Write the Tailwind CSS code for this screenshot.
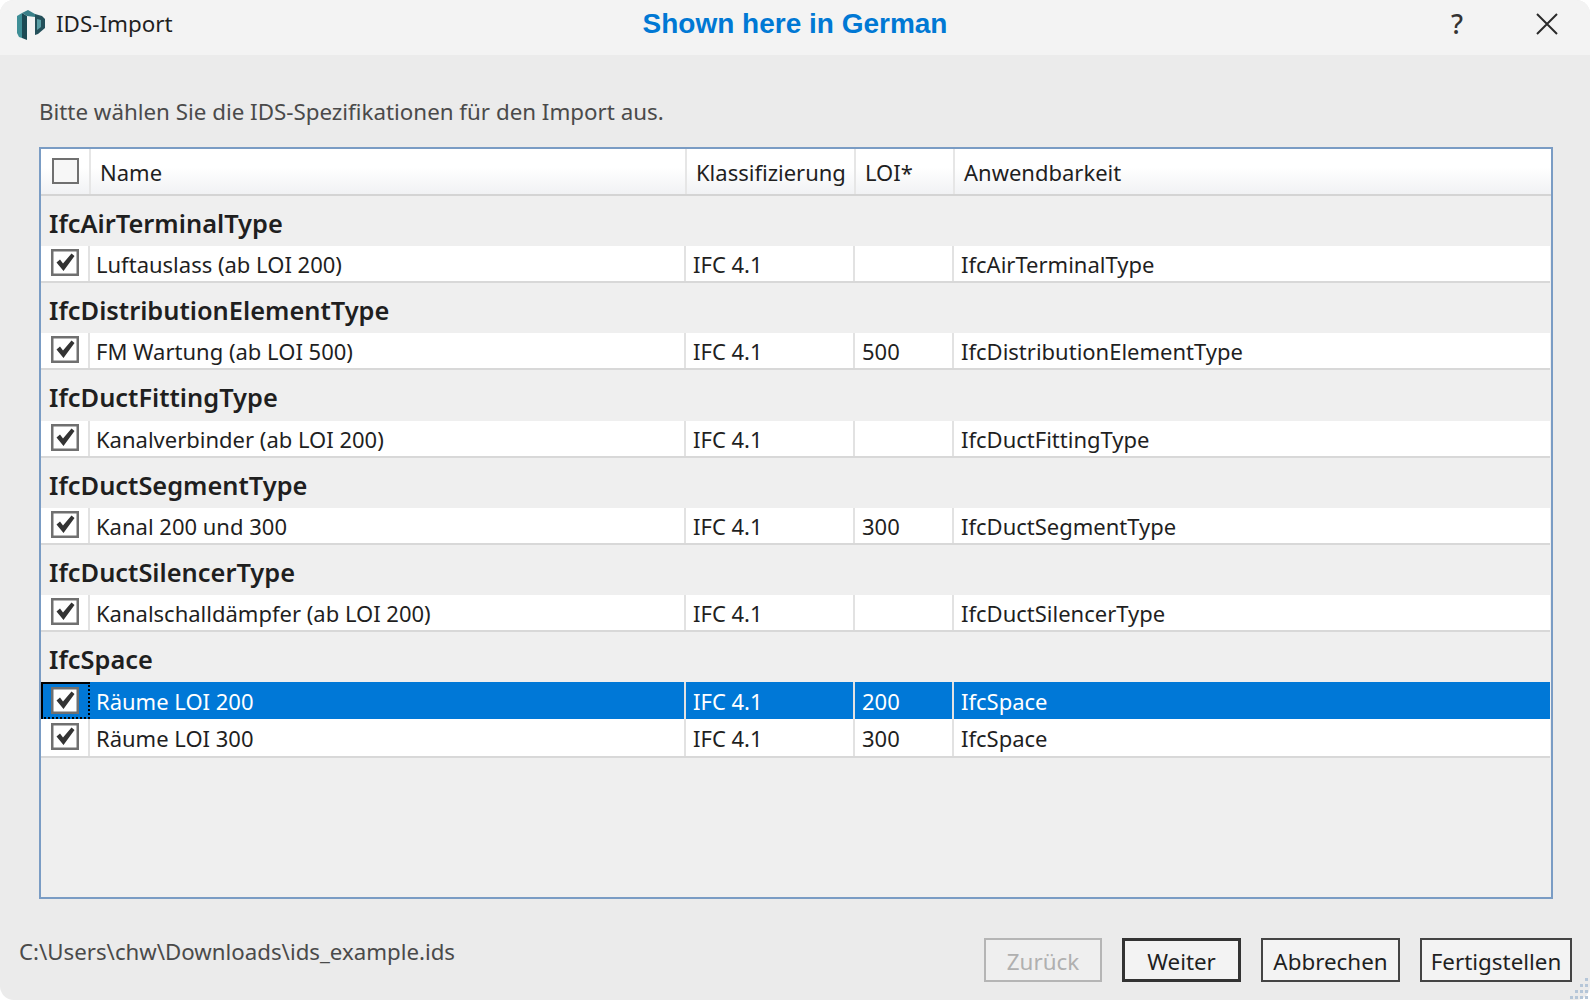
<!DOCTYPE html>
<html lang="de">
<head>
  <meta charset="UTF-8" />
  <title>IDS-Import</title>
  <script src="https://cdn.jsdelivr.net/npm/@tailwindcss/browser@4"></script>
</head>
<body class="relative bg-white h-[1000px] overflow-hidden font-['Noto_Sans','Open_Sans',sans-serif] text-[#1f1f1f]">
  <div class="h-[1000px] rounded-[14px] bg-[#ebebeb] overflow-hidden flex flex-col">

    <!-- title bar -->
    <div class="h-[55px] pb-[7px] bg-[#f3f3f3] flex items-center relative shrink-0">
      <svg class="ml-[16px] w-[30px] h-[32px]" viewBox="0 0 30 32">
        <path d="M1 8 L6 5 L6 30 L3 29 L1 25 Z" fill="#3f8f97" />
        <path d="M6 5 L11 8 L11 32 L6 30 Z" fill="#1c4a54" />
        <path d="M6 5 L12 2 L19 6 L19 9 L11 8 Z" fill="#3a8089" />
        <path d="M19 6 L26 8 L29 11 L29 20 L22 26 L19 27 Z" fill="#24505a" />
        <path d="M21 11 L25 12 L25 19 L21 22 Z" fill="#5a9fa6" />
      </svg>
      <span class="ml-[10px] text-[22.4px] leading-none">IDS-Import</span>
      <span class="absolute left-0 right-0 text-center text-[28px] font-bold text-[#0078d4] font-['Liberation_Sans',sans-serif]">Shown here in German</span>
      <span class="absolute left-[1451px] text-[27px] font-medium text-[#333]">?</span>
      <svg class="absolute left-[1535px] top-[12px] w-[24px] h-[24px]" viewBox="0 0 24 24" fill="none" stroke="#2a2a2a" stroke-width="2"><path d="M2 2 L22 22 M22 2 L2 22" /></svg>
    </div>

    <div class="pl-[39px] pt-[42px] h-[92px] text-[22.35px] leading-[30px] text-[#4a4a4a] shrink-0">Bitte wählen Sie die IDS-Spezifikationen für den Import aus.</div>

    <!-- table -->
    <div class="ml-[39px] w-[1514px] h-[752px] border-2 border-[#7a9cc4] bg-[#efefef] shrink-0 text-[22px]">
      <div class="grid grid-cols-[50px_596px_169px_99px_1fr] h-[47px] border-b-2 border-[#d4d4d4] bg-gradient-to-b from-white from-40% to-[#f1f2f4]">
        <div class="flex items-center justify-center border-r-2 border-[#e6e6e6] pl-[1px]"><span class="w-[27px] h-[26px] border-2 border-[#707070] bg-[#f7f7f7] mb-[1px]"></span></div>
        <div class="flex items-center pl-[9px] pt-[2px] border-r-2 border-[#e6e6e6]">Name</div>
        <div class="flex items-center pl-[9px] pt-[2px] border-r-2 border-[#e6e6e6]">Klassifizierung</div>
        <div class="flex items-center pl-[9px] pt-[2px] border-r-2 border-[#e6e6e6]">LOI*</div>
        <div class="flex items-center pl-[9px] pt-[2px]">Anwendbarkeit</div>
      </div>

      <div class="h-[50.2px] pl-[8px] flex items-end pb-[4px] text-[25.4px] font-semibold">IfcAirTerminalType</div>
      <div class="grid grid-cols-[49px_596px_169px_99px_1fr] h-[37px] w-[1509px] border-b-2 border-[#d8d8d8] bg-white">
        <div class="flex items-center justify-center border-r-2 border-[#e2e2e2] pb-[2px]"><svg class="w-[28px] h-[27px]" viewBox="0 0 28 27"><rect x="1.25" y="1.25" width="25.5" height="24.5" fill="#fff" stroke="#707070" stroke-width="2.5" /><path d="M5.5 13.5 L9 10.5 L12 14.5 L20.5 4.5 L23.5 7 L12.5 22 Z" fill="#333" /></svg></div>
        <div class="flex items-center pl-[6px] pt-[2px] border-r-2 border-[#e2e2e2]">Luftauslass (ab LOI 200)</div>
        <div class="flex items-center pl-[7px] pt-[2px] border-r-2 border-[#e2e2e2]">IFC 4.1</div>
        <div class="flex items-center pl-[7px] pt-[2px] border-r-2 border-[#e2e2e2]"></div>
        <div class="flex items-center pl-[7px] pt-[2px]">IfcAirTerminalType</div>
      </div>

      <div class="h-[50.2px] pl-[8px] flex items-end pb-[4px] text-[25.4px] font-semibold">IfcDistributionElementType</div>
      <div class="grid grid-cols-[49px_596px_169px_99px_1fr] h-[37px] w-[1509px] border-b-2 border-[#d8d8d8] bg-white">
        <div class="flex items-center justify-center border-r-2 border-[#e2e2e2] pb-[2px]"><svg class="w-[28px] h-[27px]" viewBox="0 0 28 27"><rect x="1.25" y="1.25" width="25.5" height="24.5" fill="#fff" stroke="#707070" stroke-width="2.5" /><path d="M5.5 13.5 L9 10.5 L12 14.5 L20.5 4.5 L23.5 7 L12.5 22 Z" fill="#333" /></svg></div>
        <div class="flex items-center pl-[6px] pt-[2px] border-r-2 border-[#e2e2e2]">FM Wartung (ab LOI 500)</div>
        <div class="flex items-center pl-[7px] pt-[2px] border-r-2 border-[#e2e2e2]">IFC 4.1</div>
        <div class="flex items-center pl-[7px] pt-[2px] border-r-2 border-[#e2e2e2]">500</div>
        <div class="flex items-center pl-[7px] pt-[2px]">IfcDistributionElementType</div>
      </div>

      <div class="h-[50.2px] pl-[8px] flex items-end pb-[4px] text-[25.4px] font-semibold">IfcDuctFittingType</div>
      <div class="grid grid-cols-[49px_596px_169px_99px_1fr] h-[37px] w-[1509px] border-b-2 border-[#d8d8d8] bg-white">
        <div class="flex items-center justify-center border-r-2 border-[#e2e2e2] pb-[2px]"><svg class="w-[28px] h-[27px]" viewBox="0 0 28 27"><rect x="1.25" y="1.25" width="25.5" height="24.5" fill="#fff" stroke="#707070" stroke-width="2.5" /><path d="M5.5 13.5 L9 10.5 L12 14.5 L20.5 4.5 L23.5 7 L12.5 22 Z" fill="#333" /></svg></div>
        <div class="flex items-center pl-[6px] pt-[2px] border-r-2 border-[#e2e2e2]">Kanalverbinder (ab LOI 200)</div>
        <div class="flex items-center pl-[7px] pt-[2px] border-r-2 border-[#e2e2e2]">IFC 4.1</div>
        <div class="flex items-center pl-[7px] pt-[2px] border-r-2 border-[#e2e2e2]"></div>
        <div class="flex items-center pl-[7px] pt-[2px]">IfcDuctFittingType</div>
      </div>

      <div class="h-[50.2px] pl-[8px] flex items-end pb-[4px] text-[25.4px] font-semibold">IfcDuctSegmentType</div>
      <div class="grid grid-cols-[49px_596px_169px_99px_1fr] h-[37px] w-[1509px] border-b-2 border-[#d8d8d8] bg-white">
        <div class="flex items-center justify-center border-r-2 border-[#e2e2e2] pb-[2px]"><svg class="w-[28px] h-[27px]" viewBox="0 0 28 27"><rect x="1.25" y="1.25" width="25.5" height="24.5" fill="#fff" stroke="#707070" stroke-width="2.5" /><path d="M5.5 13.5 L9 10.5 L12 14.5 L20.5 4.5 L23.5 7 L12.5 22 Z" fill="#333" /></svg></div>
        <div class="flex items-center pl-[6px] pt-[2px] border-r-2 border-[#e2e2e2]">Kanal 200 und 300</div>
        <div class="flex items-center pl-[7px] pt-[2px] border-r-2 border-[#e2e2e2]">IFC 4.1</div>
        <div class="flex items-center pl-[7px] pt-[2px] border-r-2 border-[#e2e2e2]">300</div>
        <div class="flex items-center pl-[7px] pt-[2px]">IfcDuctSegmentType</div>
      </div>

      <div class="h-[50.2px] pl-[8px] flex items-end pb-[4px] text-[25.4px] font-semibold">IfcDuctSilencerType</div>
      <div class="grid grid-cols-[49px_596px_169px_99px_1fr] h-[37px] w-[1509px] border-b-2 border-[#d8d8d8] bg-white">
        <div class="flex items-center justify-center border-r-2 border-[#e2e2e2] pb-[2px]"><svg class="w-[28px] h-[27px]" viewBox="0 0 28 27"><rect x="1.25" y="1.25" width="25.5" height="24.5" fill="#fff" stroke="#707070" stroke-width="2.5" /><path d="M5.5 13.5 L9 10.5 L12 14.5 L20.5 4.5 L23.5 7 L12.5 22 Z" fill="#333" /></svg></div>
        <div class="flex items-center pl-[6px] pt-[2px] border-r-2 border-[#e2e2e2]">Kanalschalldämpfer (ab LOI 200)</div>
        <div class="flex items-center pl-[7px] pt-[2px] border-r-2 border-[#e2e2e2]">IFC 4.1</div>
        <div class="flex items-center pl-[7px] pt-[2px] border-r-2 border-[#e2e2e2]"></div>
        <div class="flex items-center pl-[7px] pt-[2px]">IfcDuctSilencerType</div>
      </div>

      <div class="h-[50.2px] pl-[8px] flex items-end pb-[4px] text-[25.4px] font-semibold">IfcSpace</div>
      <div class="grid grid-cols-[49px_596px_169px_99px_1fr] h-[37px] w-[1509px] bg-[#0078d7] text-white">
        <div class="flex items-center justify-center border-2 border-dotted border-black [border-top-style:solid] [border-left-style:solid] pb-[1px] pr-[2px]"><svg class="w-[28px] h-[27px]" viewBox="0 0 28 27"><rect x="1.25" y="1.25" width="25.5" height="24.5" fill="#fff" stroke="#707070" stroke-width="2.5" /><path d="M5.5 13.5 L9 10.5 L12 14.5 L20.5 4.5 L23.5 7 L12.5 22 Z" fill="#333" /></svg></div>
        <div class="flex items-center pl-[6px] pt-[2px] border-r-2 border-[#e2e2e2]">Räume LOI 200</div>
        <div class="flex items-center pl-[7px] pt-[2px] border-r-2 border-[#e2e2e2]">IFC 4.1</div>
        <div class="flex items-center pl-[7px] pt-[2px] border-r-2 border-[#e2e2e2]">200</div>
        <div class="flex items-center pl-[7px] pt-[2px]">IfcSpace</div>
      </div>
      <div class="grid grid-cols-[49px_596px_169px_99px_1fr] h-[39px] w-[1509px] border-b-2 border-[#d8d8d8] bg-white">
        <div class="flex items-center justify-center border-r-2 border-[#e2e2e2] pb-[2px]"><svg class="w-[28px] h-[27px]" viewBox="0 0 28 27"><rect x="1.25" y="1.25" width="25.5" height="24.5" fill="#fff" stroke="#707070" stroke-width="2.5" /><path d="M5.5 13.5 L9 10.5 L12 14.5 L20.5 4.5 L23.5 7 L12.5 22 Z" fill="#333" /></svg></div>
        <div class="flex items-center pl-[6px] pt-[2px] border-r-2 border-[#e2e2e2]">Räume LOI 300</div>
        <div class="flex items-center pl-[7px] pt-[2px] border-r-2 border-[#e2e2e2]">IFC 4.1</div>
        <div class="flex items-center pl-[7px] pt-[2px] border-r-2 border-[#e2e2e2]">300</div>
        <div class="flex items-center pl-[7px] pt-[2px]">IfcSpace</div>
      </div>
    </div>

    <!-- footer -->
    <div class="flex-1 flex items-start pl-[19px] pr-[18px] pt-[39px]">
      <span class="text-[22.25px] leading-[30px] text-[#4a4a4a] -mt-[1px]">C:\Users\chw\Downloads\ids_example.ids</span>
      <div class="ml-auto flex gap-[20px] text-[22.4px]">
        <button class="w-[118px] h-[44px] pt-[4px] border-2 border-[#b5b5b5] text-[#b0b0b0] bg-[#efefef]">Zurück</button>
        <button class="w-[119px] h-[44px] pt-[4px] border-[3px] border-[#333] bg-[#f3f3f3]">Weiter</button>
        <button class="w-[139px] h-[44px] pt-[4px] border-2 border-[#444] bg-[#f3f3f3]">Abbrechen</button>
        <button class="w-[152px] h-[44px] pt-[4px] border-2 border-[#444] bg-[#f3f3f3]">Fertigstellen</button>
      </div>
    </div>
  </div>

  <!-- resize grip -->
  <svg class="absolute right-0 bottom-0 w-[20px] h-[24px]" viewBox="0 0 20 24" fill="#b5c6d8">
    <rect x="15" y="2" width="3" height="3" /><rect x="10" y="8" width="3" height="3" /><rect x="15" y="8" width="3" height="3" /><rect x="5" y="14" width="3" height="3" /><rect x="10" y="14" width="3" height="3" /><rect x="15" y="14" width="3" height="3" /><rect x="0" y="20" width="3" height="3" /><rect x="5" y="20" width="3" height="3" /><rect x="10" y="20" width="3" height="3" /><rect x="15" y="20" width="3" height="3" />
  </svg>
</body>
</html>
